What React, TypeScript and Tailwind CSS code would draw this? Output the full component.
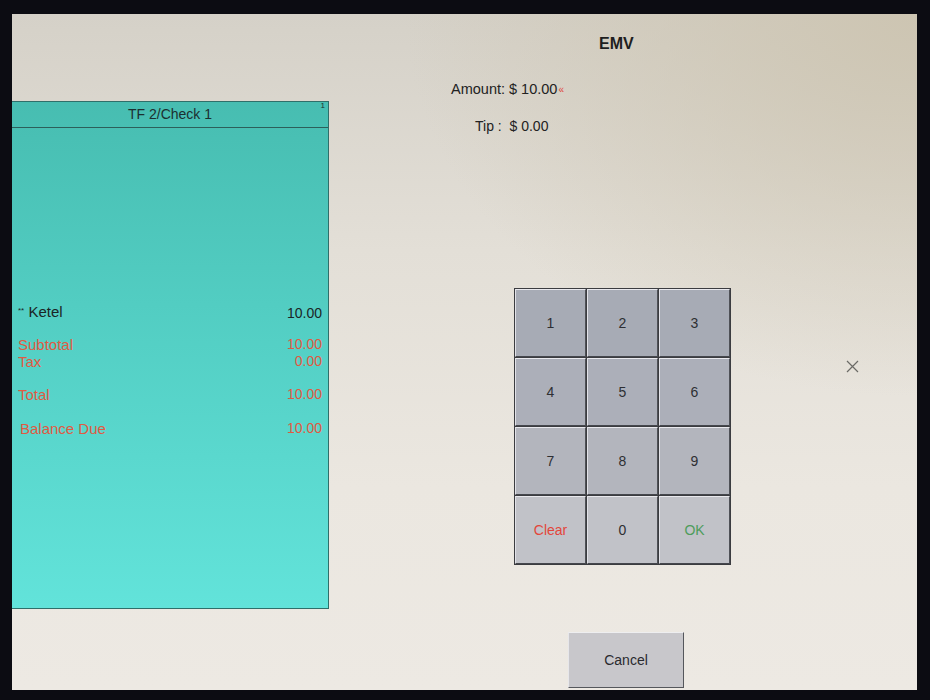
import React from "react";

const KEYS = ["1", "2", "3", "4", "5", "6", "7", "8", "9", "Clear", "0", "OK"];

function KeyButton({ label, row }: { label: string; row: number }) {
  const tone =
    row === 0
      ? "bg-[#a7abb5]"
      : row === 1
        ? "bg-[#acafb9]"
        : row === 2
          ? "bg-[#b3b5bd]"
          : "bg-[#c1c2c8]";
  const color = label === "Clear" ? "text-[#e3463b]" : label === "OK" ? "text-[#4e9c5c]" : "text-[#2e2f33]";
  return (
    <button
      type="button"
      className={`flex items-center justify-center border border-t-[#e9e9ee] border-l-[#e2e2e8] border-r-[#4f5157] border-b-[#45474d] text-[14px] ${tone} ${color}`}
    >
      {label}
    </button>
  );
}

function CheckPanel() {
  return (
    <div className="flex h-[508px] flex-col border border-l-0 border-[#2f6f6a] bg-[linear-gradient(180deg,#47bdb1_0%,#52cdc2_40%,#62e3da_100%)] text-[15px] leading-[17px]">
      <div className="relative flex h-[26px] items-center justify-center border-b border-[#2c5f5b] text-[14px] text-[#1c2f30]">
        TF 2/Check 1
        <span className="absolute right-[3px] top-[0px] text-[8px] leading-none text-[#1c2f30]">1</span>
      </div>
      <div className="flex flex-col pl-[6px] pr-[6px] pt-[175px]">
        <div className="flex items-center justify-between text-[#1b2526]">
          <span>
            <span className="relative -top-[4px] text-[8px]">**</span> Ketel
          </span>
          <span className="text-[14px]">10.00</span>
        </div>
        <div className="h-[13px]" />
        <div className="flex items-center justify-between text-[#e05a42]">
          <span>Subtotal</span>
          <span className="text-[14px]">10.00</span>
        </div>
        <div className="flex items-center justify-between text-[#e05a42]">
          <span>Tax</span>
          <span className="text-[14px]">0.00</span>
        </div>
        <div className="h-[16px]" />
        <div className="flex items-center justify-between text-[#e05a42]">
          <span>Total</span>
          <span className="text-[14px]">10.00</span>
        </div>
        <div className="h-[17px]" />
        <div className="flex items-center justify-between text-[#e05a42]">
          <span className="pl-[2px]">Balance Due</span>
          <span className="text-[14px]">10.00</span>
        </div>
      </div>
    </div>
  );
}

export default function App() {
  return (
    <div
      className="h-[700px] w-[930px] bg-[#0c0c12] pb-[10px] pl-[12px] pr-[13px] pt-[14px]"
      style={{ fontFamily: '"Liberation Sans", Arial, sans-serif' }}
    >
      <div className="flex h-full w-full bg-[radial-gradient(ellipse_at_100%_0%,#cdc5b2_0%,rgba(205,197,178,0)_40%),linear-gradient(180deg,#d5d1c8_0%,#e3dfd7_35%,#ebe7e0_70%,#ede9e3_100%)]">
        <div className="w-[317px] pt-[87px]">
          <CheckPanel />
        </div>

        <div className="flex flex-1 flex-col">
          <div className="pl-[270px] pt-[20px] text-[16px] font-bold leading-[20px] text-[#1e1e20]">EMV</div>
          <div className="mt-[27px] pl-[122px] text-[14.5px] leading-[16px] text-[#222]">
            Amount: $ 10.00<span className="relative -top-[1px] ml-[1px] text-[10px] text-[#e0453a]">«</span>
          </div>
          <div className="mt-[19px] pl-[146px] text-[14px] leading-[16px] text-[#222]">Tip :&nbsp; $ 0.00</div>

          <div className="mt-[154px] flex pl-[185px]">
            <div className="grid h-[277px] w-[217px] grid-cols-3 grid-rows-4 gap-[1px] bg-[#3b3c40] p-[1px]">
              {KEYS.map((k, i) => (
                <KeyButton key={k} label={k} row={Math.floor(i / 3)} />
              ))}
            </div>
            <div className="ml-[115px] mt-[72px] self-start">
              <svg width="13" height="13" viewBox="0 0 13 13">
                <path d="M1 1 L12 12 M12 1 L1 12" stroke="#6b6a66" strokeWidth="1.2" fill="none" />
              </svg>
            </div>
          </div>

          <div className="mt-[67px] flex pl-[239px]">
            <button
              type="button"
              className="h-[56px] w-[116px] border border-t-[#eeeef0] border-l-[#e6e6ea] border-r-[#55575c] border-b-[#55575c] bg-[#c8c7cb] text-[14px] text-[#2a2a2e]"
            >
              Cancel
            </button>
          </div>
        </div>
      </div>
    </div>
  );
}
